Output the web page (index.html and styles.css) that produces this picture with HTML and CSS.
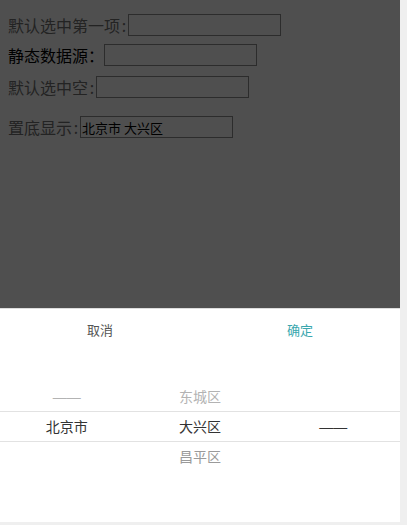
FILE: index.html
```html
<!DOCTYPE html>
<html lang="zh">
<head>
<meta charset="utf-8">
<title>Picker</title>
<link rel="stylesheet" href="styles.css">
</head>
<body>
<div class="screen">
  <div class="form">
    <div class="row r1"><span class="label muted">默认选中第一项<span class="colon">:</span></span><input class="field" type="text"></div>
    <div class="row r2"><span class="label strong">静态数据源：</span><input class="field" type="text"></div>
    <div class="row r3"><span class="label muted">默认选中空<span class="colon">:</span></span><input class="field" type="text"></div>
    <div class="row r4"><span class="label muted">置底显示<span class="colon">:</span></span><input class="field" type="text" value="北京市 大兴区"></div>
  </div>
  <div class="mask"></div>
  <div class="picker">
    <div class="picker-head">
      <span class="btn cancel">取消</span>
      <span class="btn ok">确定</span>
    </div>
    <div class="wheel">
      <div class="band"></div>
      <div class="col">
        <div class="item"></div>
        <div class="item"></div>
        <div class="item far">——</div>
        <div class="item cur">北京市</div>
        <div class="item"></div>
      </div>
      <div class="col">
        <div class="item"></div>
        <div class="item"></div>
        <div class="item far">东城区</div>
        <div class="item cur">大兴区</div>
        <div class="item near">昌平区</div>
      </div>
      <div class="col">
        <div class="item"></div>
        <div class="item"></div>
        <div class="item"></div>
        <div class="item cur">——</div>
        <div class="item"></div>
      </div>
    </div>
  </div>
</div>
</body>
</html>
```
FILE: styles.css
```css
html {
  background: #efefef;
}
body {
  margin: 0;
}
.screen {
  position: relative;
  width: 400px;
  height: 522px;
  background: #fff;
  overflow: hidden;
}
.form {
  padding: 10px 8px 0;
  font-family: "Noto Sans CJK SC", sans-serif;
  font-size: 16px;
}
.row {
  display: flex;
  align-items: center;
  height: 30px;
}
.r3 { margin-top: 2px; }
.r4 { margin-top: 10px; }
.label {
  white-space: nowrap;
  line-height: 20px;
}
.muted { color: #707070; }
.strong { color: #000; }
.colon {
  display: inline-block;
  width: 8px;
  text-align: center;
}
.field {
  box-sizing: border-box;
  width: 153px;
  height: 22px;
  margin: 0;
  padding: 0 1px;
  border: 1px solid #8f8f8f;
  background: #fff;
  font-family: "Noto Sans CJK SC", sans-serif;
  font-size: 13px;
  color: #000;
  outline: none;
}
.mask {
  position: absolute;
  inset: 0;
  background: rgba(0, 0, 0, 0.69);
}
.picker {
  position: absolute;
  left: 0;
  right: 0;
  bottom: 0;
  height: 213px;
  background: #fff;
  border-top: 1px solid #ddd;
  font-family: "Liberation Sans", "Noto Sans CJK SC", sans-serif;
}
.picker-head {
  display: grid;
  grid-template-columns: 1fr 1fr;
  height: 44px;
  align-items: center;
  font-size: 13px;
}
.btn {
  text-align: center;
  line-height: 44px;
}
.cancel { color: #555; }
.ok { color: #3aa7ae; }
.wheel {
  position: relative;
  display: grid;
  grid-template-columns: repeat(3, 1fr);
}
.band {
  position: absolute;
  left: 0;
  right: 0;
  top: 58px;
  height: 29px;
  border-top: 1px solid #e2e2e2;
  border-bottom: 1px solid #e2e2e2;
}
.col {
  display: flex;
  flex-direction: column;
  margin-top: -31px;
}
.item {
  height: 30px;
  line-height: 30px;
  text-align: center;
  font-size: 14px;
  color: #aaa;
}
.item.far { color: #b3b3b3; }
.item.near { color: #9a9a9a; }
.item.cur { color: #333; }
```
